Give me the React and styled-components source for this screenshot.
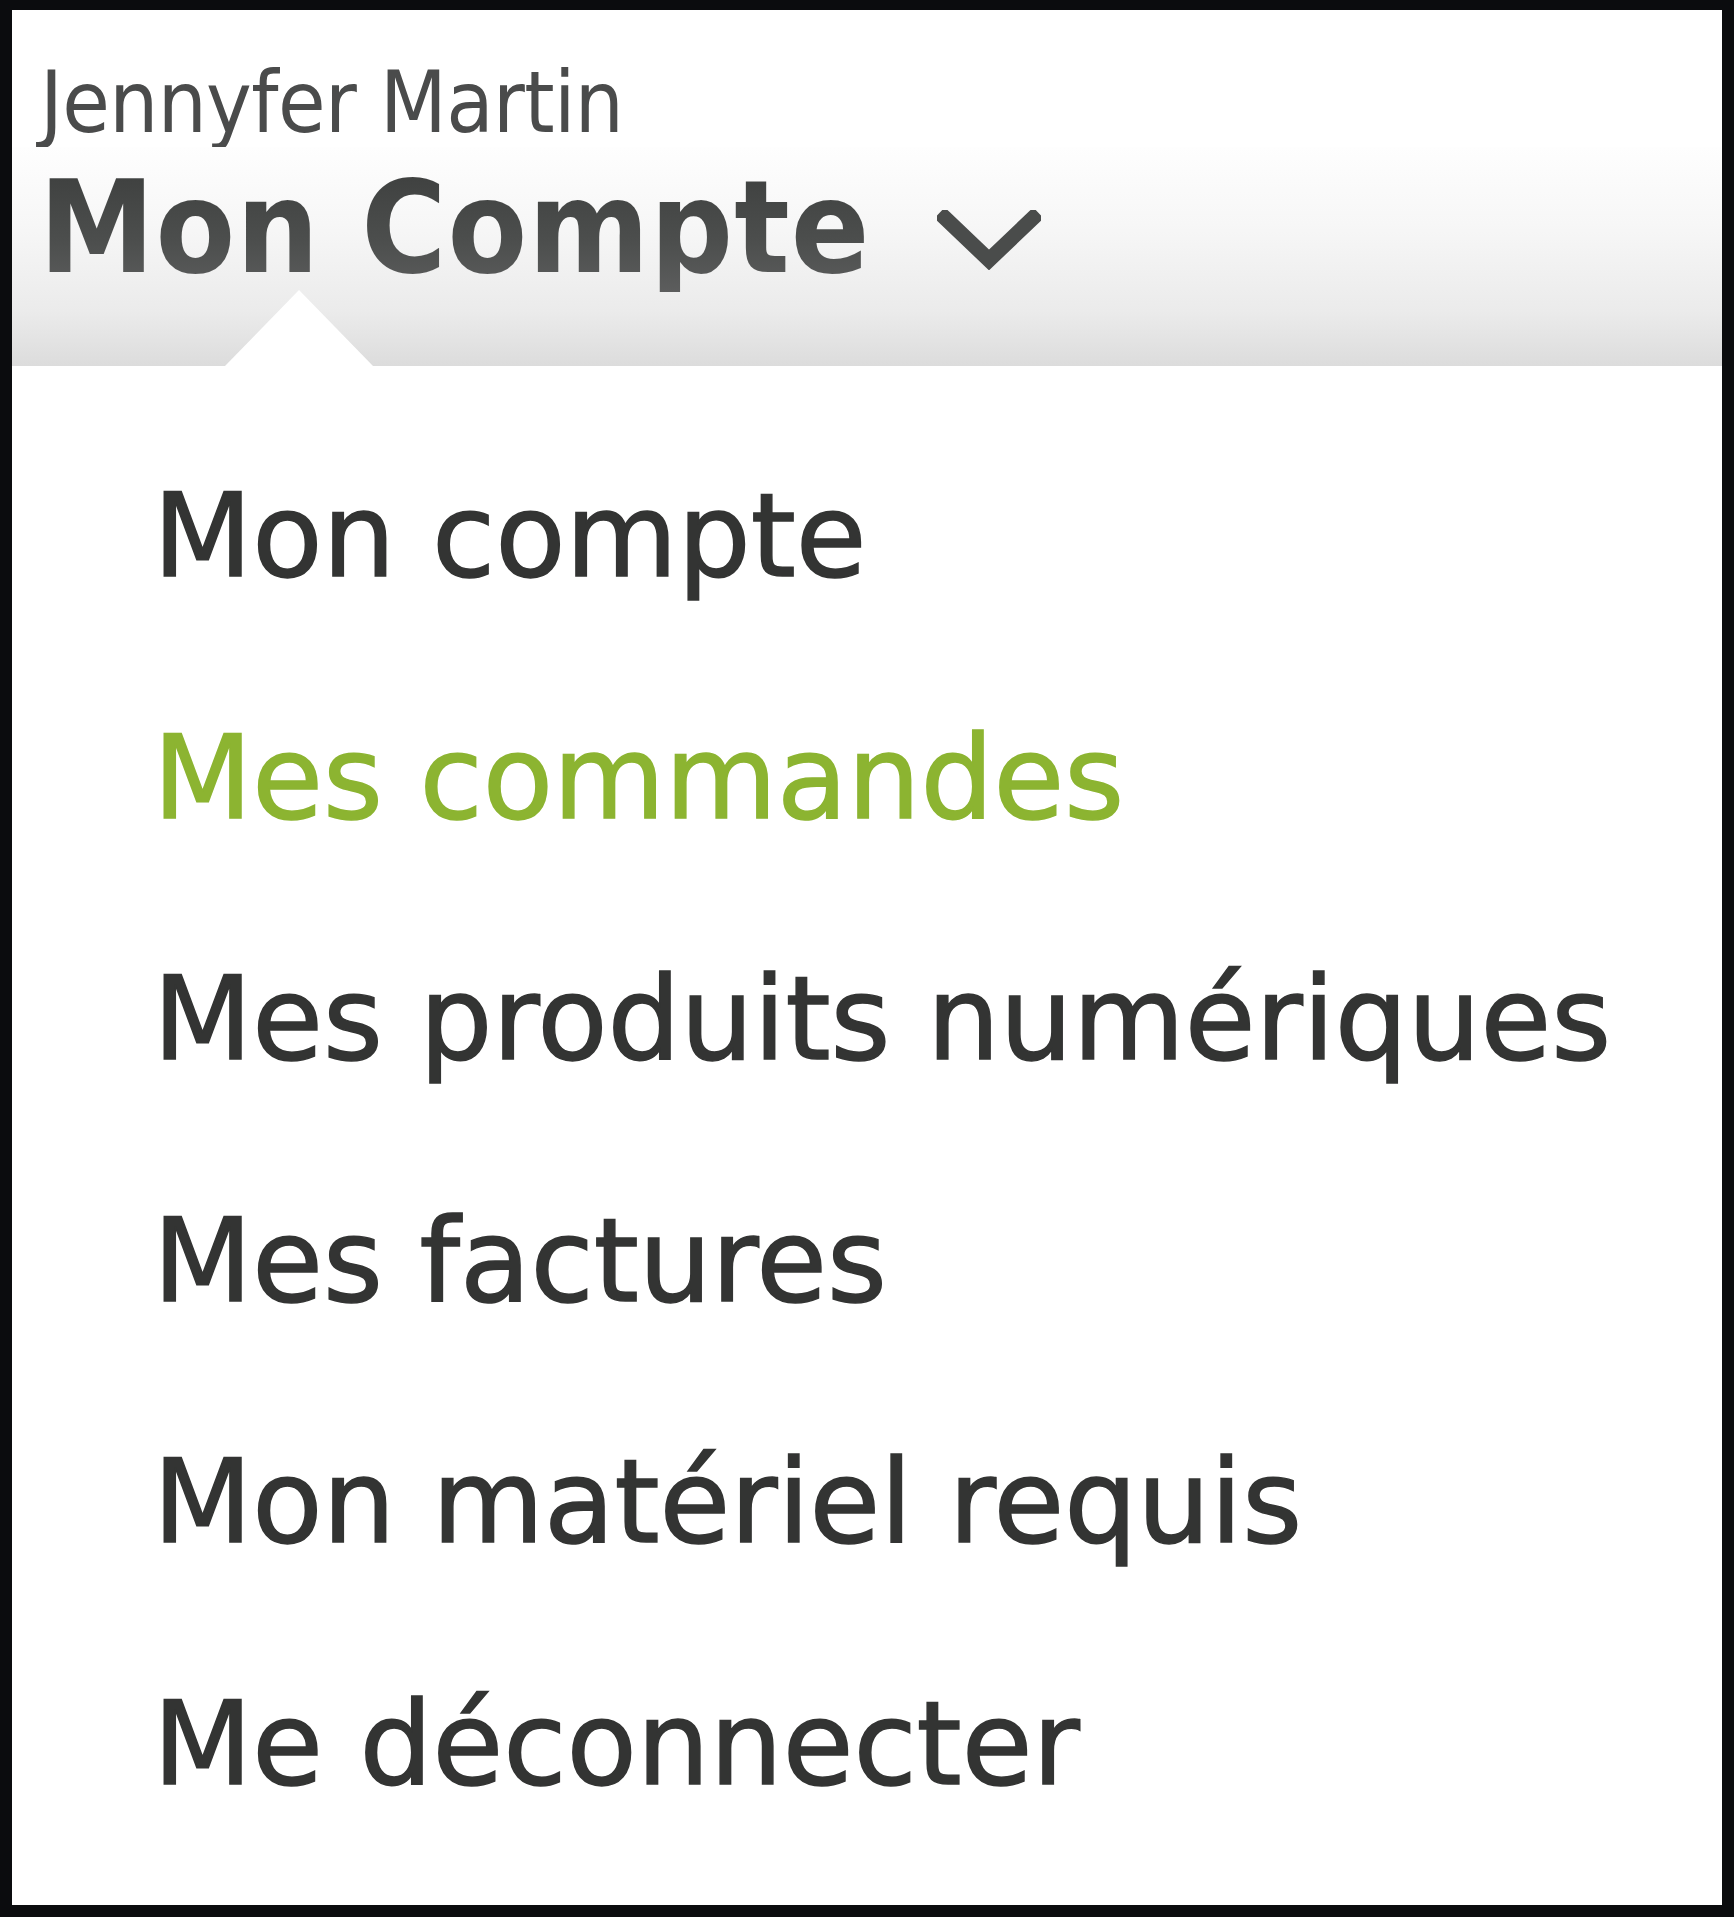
import styled, { createGlobalStyle } from "styled-components";

const GlobalStyle = createGlobalStyle`
  html, body {
    margin: 0;
    padding: 0;
    background: #0b0c0e;
  }
`;

const Frame = styled.div`
  width: 1734px;
  height: 1917px;
  box-sizing: border-box;
  padding: 10px 12px 12px 12px;
  background: #0b0c0e;
`;

const Panel = styled.div`
  height: 100%;
  background: #ffffff;
  display: flex;
  flex-direction: column;
`;

const UserName = styled.div`
  height: 137px;
  box-sizing: border-box;
  padding: 50px 0 0 28px;
  font-family: "DejaVu Sans Condensed", "DejaVu Sans", sans-serif;
  font-stretch: condensed;
  font-size: 86px;
  line-height: 85px;
  letter-spacing: -0.6px;
  color: #4a4b4b;
`;

const AccountBar = styled.div`
  position: relative;
  height: 219px;
  box-sizing: border-box;
  padding: 16px 0 0 27px;
  display: flex;
  align-items: flex-start;
  background: linear-gradient(to bottom, #fefefe 0%, #f7f7f7 35%, #ebebeb 75%, #dcdcdc 100%);

  &::after {
    content: "";
    position: absolute;
    left: 213px;
    bottom: 0;
    border-left: 74px solid transparent;
    border-right: 74px solid transparent;
    border-bottom: 76px solid #ffffff;
  }
`;

const AccountTitle = styled.span`
  font-family: "DejaVu Sans Condensed", "DejaVu Sans", sans-serif;
  font-stretch: condensed;
  font-weight: 700;
  font-size: 129px;
  line-height: 129px;
  letter-spacing: 1px;
  background: linear-gradient(to bottom, #3d3f3e 0%, #4c4e4d 60%, #5c5d5d 100%);
  -webkit-background-clip: text;
  background-clip: text;
  color: transparent;
`;

const Chevron = styled.svg`
  width: 104px;
  height: 60px;
  margin: 47px 0 0 67px;
  flex: none;
`;

const Menu = styled.ul`
  list-style: none;
  margin: 0;
  padding: 50px 0 0 141px;
`;

const MenuItem = styled.li`
  font-family: "DejaVu Sans", sans-serif;
  font-size: 115px;
  line-height: 241.6px;
  height: 241.6px;
  white-space: nowrap;
  color: ${props => (props.$active ? "#8cb431" : "#333433")};
  -webkit-text-stroke: 1.5px ${props => (props.$active ? "#8cb431" : "#333433")};
`;

const items = [
  "Mon compte",
  "Mes commandes",
  "Mes produits numériques",
  "Mes factures",
  "Mon matériel requis",
  "Me déconnecter",
];

const App = () => {
  return (
    <Frame>
      <GlobalStyle />
      <Panel>
        <UserName>Jennyfer Martin</UserName>
        <AccountBar>
          <AccountTitle>Mon Compte</AccountTitle>
          <Chevron viewBox="0 0 104 60">
            <polyline points="8,8 52,50 96,8" fill="none" stroke="#4a4c4b" strokeWidth="15" strokeLinecap="square" />
          </Chevron>
        </AccountBar>
        <Menu>
          {items.map((label) => (
            <MenuItem key={label} $active={label === "Mes commandes"}>
              {label}
            </MenuItem>
          ))}
        </Menu>
      </Panel>
    </Frame>
  );
};

export default App;
